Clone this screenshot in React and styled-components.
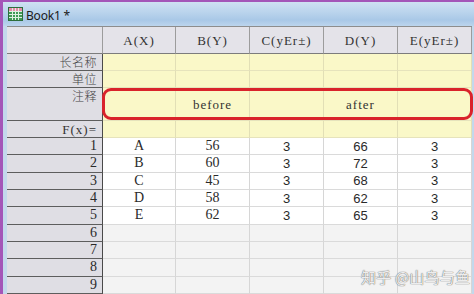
import React from "react";
import styled, { createGlobalStyle } from "styled-components";

const GlobalStyle = createGlobalStyle`
    html, body { margin: 0; padding: 0; }
    body { width: 474px; height: 294px; overflow: hidden; background: #a456b8; }
`;

const COLS = ["A(X)", "B(Y)", "C(yEr±)", "D(Y)", "E(yEr±)"];
const DATA = [
    ["A", "56", "3", "66", "3"],
    ["B", "60", "3", "72", "3"],
    ["C", "45", "3", "68", "3"],
    ["D", "58", "3", "62", "3"],
    ["E", "62", "3", "65", "3"],
];
const EMPTY_ROWS = [6, 7, 8, 9];

const Page = styled.div`
    position: relative;
    width: 474px;
    height: 294px;
    padding: 2px 0 0 3px;
    box-sizing: border-box;
    overflow: hidden;
`, Window = styled.div`
    height: 100%;
    background: #c3d8ec;
    padding-left: 4px;
    box-sizing: border-box;
`, TitleBar = styled.div`
    height: 24px;
    margin-left: -4px;
    padding-left: 5px;
    display: flex;
    align-items: center;
    gap: 3px;
    background: linear-gradient(180deg, #cfe1f2 0%, #b9d3ec 45%, #a9c8e7 75%, #bcd5ed 100%);
    font-family: "Noto Sans", "Open Sans", sans-serif;
    font-size: 12px;
    color: #1b1b1b;
`, Title = styled.span`
    padding-top: 2px;
    letter-spacing: -0.2px;
`, Sheet = styled.div`
    position: relative;
    display: grid;
    grid-template-columns: 96px 73px 74px 74px 74px 74px;
    grid-template-rows: 27px 17px 17px 33px 17px repeat(9, 17.33px);
    width: 465px;
    border-top: 1px solid #8d8d8d;
    background: #fff;
`, Cell = styled.div`
    box-sizing: border-box;
    display: flex;
    align-items: ${p => p.$top ? "flex-start" : "center"};
    justify-content: ${p => p.$right ? "flex-end" : "center"};
    padding: ${p => p.$right ? "0 5px 0 0" : "0"};
    white-space: nowrap;
    line-height: 1;
    color: #2a2a2a;
    font-family: ${p => p.$sans ? '"Liberation Sans", Arial, sans-serif' : '"Liberation Serif", serif'};
    font-size: ${p => p.$sans ? "13px" : "14px"};
    background: ${p => ({ head: "#e4e3e9", row: "#dfdee4", meta: "#faf8c8", data: "#fff", empty: "#f3f3f3" })[p.$kind]};
    border-right: 1px solid ${p => ({ head: "#9c9c9c", row: "#4a4a4a", meta: "#e2dfb6", data: "#d6d6d6", empty: "#d6d6d6" })[p.$kind]};
    border-bottom: 1px solid ${p => ({ head: "#7c7c7c", row: "#5d5d5d", meta: "#e6e3bc", data: "#dadada", empty: "#dadada" })[p.$kind]};
`, Label = styled.span`
    font-family: "Liberation Serif", serif;
    font-size: 13px;
    letter-spacing: 1px;
    color: #333;
`, Cjk = styled.span`
    display: inline-block;
    height: 14px;
    font-family: "Noto Sans CJK SC", sans-serif;
    font-size: 12px;
    font-weight: 300;
    line-height: 14px;
    margin-top: ${p => p.$top ? "1px" : "0"};
    color: #444;
    letter-spacing: 0.5px;
`, Highlight = styled.div`
    position: absolute;
    left: 95px;
    top: 61px;
    width: 371px;
    height: 32px;
    box-sizing: border-box;
    border: 3px solid #d9232b;
    border-radius: 9px;
    pointer-events: none;
`, Watermark = styled.div`
    position: absolute;
    left: 361px;
    top: 266px;
    font-family: "Noto Sans CJK SC", sans-serif;
    font-size: 15px;
    color: rgba(250, 250, 250, 0.92);
    text-shadow: 0 0 1px #707070, 0 0 1px #707070;
    letter-spacing: 0.2px;
`;

const BookIcon = () => (
    <svg width="15" height="14" viewBox="0 0 15 14">
        <rect x="0.5" y="0.5" width="14" height="13" fill="#3f9a55" stroke="#2d6e3b" />
        <rect x="1" y="1" width="13" height="3" fill="#e58aa8" />
        {[4.5, 7.5, 10.5].map(x => <line key={x} x1={x} y1="1" x2={x} y2="13" stroke="#dff0e2" strokeWidth="1" />)}
        {[4.5, 7.5, 10.5].map(y => <line key={y} x1="1" y1={y} x2="14" y2={y} stroke="#dff0e2" strokeWidth="1" />)}
    </svg>
);

const metaRows = [
    { label: "长名称" },
    { label: "单位" },
    { label: "注释", top: true, values: ["", "before", "", "after", ""] },
];

export default function App() {
    return (
        <Page>
            <GlobalStyle />
            <Window>
                <TitleBar>
                    <BookIcon />
                    <Title>Book1 *</Title>
                </TitleBar>
                <Sheet>
                    <Cell $kind="head" />
                    {COLS.map(c => <Cell key={c} $kind="head"><Label>{c}</Label></Cell>)}

                    {metaRows.map(r => (
                        <React.Fragment key={r.label}>
                            <Cell $kind="row" $right $top={r.top}><Cjk $top={r.top}>{r.label}</Cjk></Cell>
                            {COLS.map((c, i) => (
                                <Cell key={c} $kind="meta">
                                    {r.values && r.values[i] ? <Label>{r.values[i]}</Label> : null}
                                </Cell>
                            ))}
                        </React.Fragment>
                    ))}

                    <Cell $kind="row" $right><Label>F(x)=</Label></Cell>
                    {COLS.map(c => <Cell key={c} $kind="meta" />)}

                    {DATA.map((row, r) => (
                        <React.Fragment key={r}>
                            <Cell $kind="row" $right>{r + 1}</Cell>
                            {row.map((v, i) => <Cell key={i} $kind="data" $sans={i > 1}>{v}</Cell>)}
                        </React.Fragment>
                    ))}

                    {EMPTY_ROWS.map(n => (
                        <React.Fragment key={n}>
                            <Cell $kind="row" $right>{n}</Cell>
                            {COLS.map(c => <Cell key={c} $kind="empty" />)}
                        </React.Fragment>
                    ))}

                    <Highlight />
                </Sheet>
            </Window>
            <Watermark>知乎 @山鸟与鱼</Watermark>
        </Page>
    );
}
